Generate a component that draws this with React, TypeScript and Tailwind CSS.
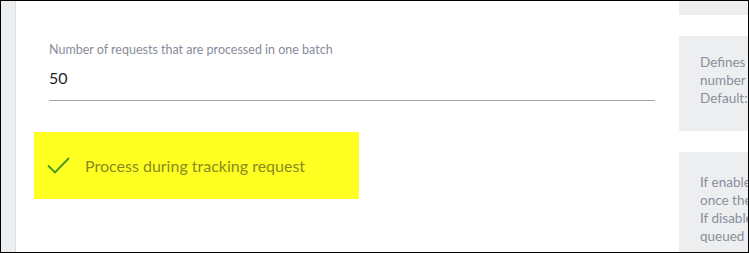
import React from 'react';

const cardLines2 = ['Defines the maximum', 'number of requests', 'Default: 50'];
const cardLines3 = [
  'If enabled, queued requests',
  'once the tracking request',
  'If disabled, requests stay',
  'queued until the next run',
];

const App = () => {
  return (
    <div
      className="w-[749px] h-[253px] overflow-hidden bg-white border border-black flex"
      style={{ fontFamily: 'Lato, "Open Sans", sans-serif' }}
    >
      {/* left rail */}
      <div className="w-[15px] shrink-0 bg-[#eceef0] border-r border-[#dcdde0]" />

      {/* form column */}
      <div className="w-[663px] shrink-0 flex flex-col pt-[40px]">
        <div className="pl-[33px]">
          <label className="block text-[12.5px] leading-[18px] text-[#8a8b9c]">
            Number of requests that are processed in one batch
          </label>
          <div className="w-[606px] mt-[8px] pb-[11px] border-b border-[#a6a6a6] text-[16px] leading-[22px] text-[#1f1f1f]">
            50
          </div>
        </div>

        <div className="ml-[18px] mt-[31px] w-[325px] h-[67px] bg-[#ffff22] flex items-center pl-[13px] gap-[15px]">
          <svg width="23" height="17" viewBox="0 0 23 17" fill="none">
            <path d="M1 8.5 L8 15.5 L22 1" stroke="#3b9a1c" strokeWidth="1.8" />
          </svg>
          <span className="text-[16px] leading-[22px] text-[#8a8a1e]">
            Process during tracking request
          </span>
        </div>
      </div>

      {/* help column */}
      <div className="flex-1 flex flex-col gap-[21px] text-[13.5px] leading-[18px] text-[#8a8f9c] whitespace-nowrap">
        <div className="h-[14px] bg-[#edeef0] rounded-b-[2px]" />
        <div className="h-[95px] bg-[#edeef0] rounded-[2px] pl-[21px] pt-[17px] overflow-hidden">
          {cardLines2.map((l) => (
            <div key={l}>{l}</div>
          ))}
        </div>
        <div className="flex-1 bg-[#edeef0] rounded-t-[2px] pl-[21px] pt-[21px] overflow-hidden">
          {cardLines3.map((l) => (
            <div key={l}>{l}</div>
          ))}
        </div>
      </div>
    </div>
  );
};

export default App;
